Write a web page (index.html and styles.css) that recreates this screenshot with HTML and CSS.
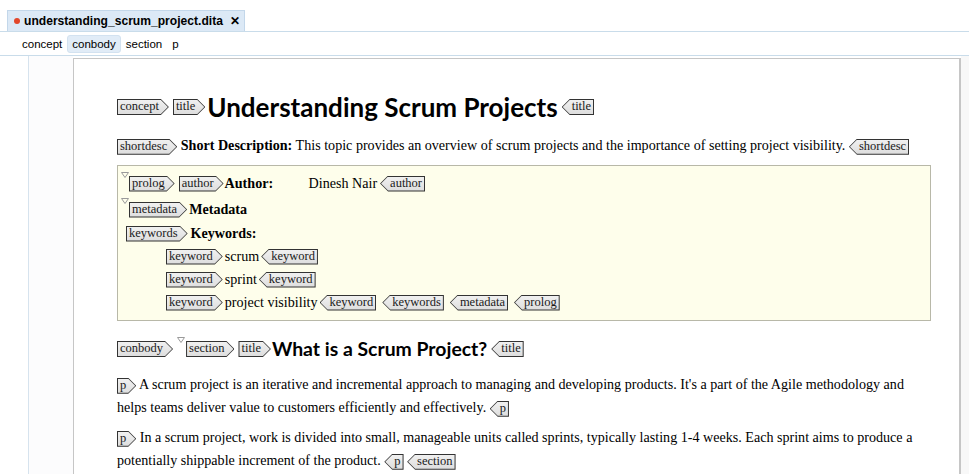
FILE: index.html
```html
<!DOCTYPE html>
<html lang="en">
<head>
    <meta charset="UTF-8">
    <title>understanding_scrum_project.dita</title>
    <link rel="stylesheet" href="styles.css">
</head>
<body>
    <div class="tabbar">
        <div class="tab">
            <span class="dot"></span>
            <span class="tab-name">understanding_scrum_project.dita</span>
            <span class="close">&#10005;</span>
        </div>
    </div>
    <div class="crumbs">
        <span class="crumb">concept</span>
        <span class="crumb active">conbody</span>
        <span class="crumb">section</span>
        <span class="crumb">p</span>
    </div>
    <div class="workspace">
        <div class="gutter"></div>
        <div class="margin"></div>
        <div class="page">
            <div class="row title-row">
                <span class="tag open">concept</span>
                <span class="tag open">title</span>
                <h1 class="title">Understanding Scrum Projects</h1>
                <span class="tag close-tag">title</span>
            </div>

            <div class="row shortdesc">
                <span class="tag open">shortdesc</span>
                <b>Short Description:</b> This topic provides an overview of scrum projects and the importance of setting project visibility.
                <span class="tag close-tag">shortdesc</span>
            </div>

            <div class="prolog">
                <div class="row prolog-row">
                    <span class="fold"><svg width="8" height="6" viewBox="0 0 8 6"><path d="M0.5 0.5 H7.5 L4 5.5 Z" fill="none" stroke="#9a9a9a"/></svg></span>
                    <span class="tag open">prolog</span>
                    <span class="tag open">author</span>
                    <b class="label">Author:</b>
                    <span class="name">Dinesh Nair</span>
                    <span class="tag close-tag">author</span>
                </div>
                <div class="row meta-row">
                    <span class="fold"><svg width="8" height="6" viewBox="0 0 8 6"><path d="M0.5 0.5 H7.5 L4 5.5 Z" fill="none" stroke="#9a9a9a"/></svg></span>
                    <span class="tag open">metadata</span>
                    <b>Metadata</b>
                </div>
                <div class="row keywords-row">
                    <span class="tag open">keywords</span>
                    <b>Keywords:</b>
                </div>
                <div class="row keyword">
                    <span class="tag open">keyword</span>scrum<span class="tag close-tag">keyword</span>
                </div>
                <div class="row keyword">
                    <span class="tag open">keyword</span>sprint<span class="tag close-tag">keyword</span>
                </div>
                <div class="row keyword">
                    <span class="tag open">keyword</span>project visibility<span class="tag close-tag">keyword</span>
                    <span class="tag close-tag">keywords</span>
                    <span class="tag close-tag">metadata</span>
                    <span class="tag close-tag">prolog</span>
                </div>
            </div>

            <div class="row section-row">
                <span class="tag open">conbody</span>
                <span class="fold"><svg width="8" height="6" viewBox="0 0 8 6"><path d="M0.5 0.5 H7.5 L4 5.5 Z" fill="none" stroke="#9a9a9a"/></svg></span>
                <span class="tag open">section</span>
                <span class="tag open">title</span>
                <h2 class="subtitle">What is a Scrum Project?</h2>
                <span class="tag close-tag">title</span>
            </div>

            <p class="para"><span class="tag open">p</span> A scrum project is an iterative and incremental approach to managing and developing products. It's a part of the Agile methodology and helps teams deliver value to customers efficiently and effectively. <span class="tag close-tag">p</span></p>
            <p class="para"><span class="tag open">p</span> In a scrum project, work is divided into small, manageable units called sprints, typically lasting 1-4 weeks. Each sprint aims to produce a potentially shippable increment of the product. <span class="tag close-tag">p</span> <span class="tag close-tag">section</span></p>
        </div>
        <div class="scroll"></div>
    </div>
</body>
</html>
```

FILE: styles.css
```css
html, body {
    margin: 0;
    height: 100%;
    overflow: hidden;
}
body {
    font-family: "Liberation Sans", Arial, sans-serif;
    background: #fff;
    color: #000;
}

/* tabs */
.tabbar {
    height: 31px;
    border-bottom: 1px solid #c9dcea;
    display: flex;
    align-items: flex-end;
    padding-left: 7px;
}
.tab {
    display: flex;
    align-items: center;
    height: 21px;
    width: 238px;
    box-sizing: border-box;
    padding-left: 6px;
    background: #dce9f6;
    border: 1px solid #c3d7ea;
    border-bottom: none;
    font-size: 12.1px;
    font-weight: bold;
}
.dot {
    flex-shrink: 0;
    width: 6px;
    height: 6px;
    border-radius: 50%;
    background: #e2462a;
    margin-right: 4px;
}
.tab-name {
    flex: 1;
}
.close {
    font-size: 12px;
    margin-right: 4px;
}

/* breadcrumb */
.crumbs {
    height: 23px;
    border-bottom: 1px solid #c9dcea;
    display: flex;
    align-items: center;
    padding-left: 17px;
    font-size: 11.5px;
}
.crumb {
    padding: 3px 5px;
    border-radius: 3px;
}
.crumb.active {
    background: #e1ecf7;
    border: 1px solid #d3e2f0;
    padding: 2px 4px;
}

/* editor area */
.workspace {
    display: flex;
    height: 100%;
}
.gutter {
    width: 28px;
    border-right: 1px solid #d6e3ee;
}
.margin {
    width: 44px;
    background: #fcfcfd;
}
.page {
    margin-top: 2px;
    width: 888px;
    border-left: 1px solid #c6c6c6;
    border-top: 1px solid #c6c6c6;
    border-right: 2px solid #c6c6c6;
    padding: 33px 28px 0 43px;
    box-sizing: border-box;
    font-family: "Liberation Serif", "Times New Roman", serif;
    font-size: 14.1px;
}
.scroll {
    flex: 1;
    background: #f8f8f8;
}

.row {
    display: flex;
    align-items: center;
    gap: 4px;
    white-space: nowrap;
}
.title {
    margin: 0 0 0 -2px;
    font-family: Lato, sans-serif;
    font-size: 26px;
    font-weight: bold;
    line-height: 30px;
}
.subtitle {
    margin: 0 0 0 -3px;
    font-family: Lato, sans-serif;
    font-size: 19.4px;
    font-weight: bold;
    line-height: 24px;
}
.shortdesc {
    margin-top: 12px;
    display: block;
    line-height: 22px;
}

/* element tags */
.tag {
    position: relative;
    z-index: 0;
    display: inline-block;
    height: 16px;
    line-height: 15px;
    font-family: "Liberation Serif", serif;
    font-size: 12.5px;
    font-weight: normal;
    color: #1a1a1a;
    background: #333;
    vertical-align: middle;
}
.tag::before {
    content: "";
    position: absolute;
    inset: 1px;
    z-index: -1;
    background: linear-gradient(#f0f0f0, #dedede);
}
.tag.open {
    padding: 0 10px 0 3px;
    clip-path: polygon(0 0, calc(100% - 8px) 0, 100% 50%, calc(100% - 8px) 100%, 0 100%);
}
.tag.open::before {
    clip-path: polygon(0 0, calc(100% - 7px) 0, 100% 50%, calc(100% - 7px) 100%, 0 100%);
}
.tag.close-tag {
    padding: 0 3px 0 10px;
    clip-path: polygon(8px 0, 100% 0, 100% 100%, 8px 100%, 0 50%);
}
.tag.close-tag::before {
    clip-path: polygon(7px 0, 100% 0, 100% 100%, 7px 100%, 0 50%);
}
.fold {
    display: inline-block;
    align-self: flex-start;
    line-height: 0;
}

/* prolog block */
.prolog {
    margin-top: 9px;
    background: #fefeeb;
    border: 1px solid #b8b8a8;
    padding: 6px 0 6px 3px;
}
.prolog .row {
    height: 23px;
    gap: 0;
}
.prolog-row .tag.open {
    margin-right: 4px;
}
.prolog-row .tag.open + .tag.open {
    margin-right: 1px;
}
.prolog-row .label {
    width: 84px;
}
.prolog-row .tag.close-tag {
    margin-left: 3px;
}
.meta-row {
    margin-top: 3px;
}
.meta-row .tag {
    margin-right: 2px;
}
.keywords-row {
    margin-top: 1px;
    padding-left: 5px;
}
.keywords-row .tag {
    margin-right: 3px;
}
.keyword {
    padding-left: 45px;
}
.keyword .tag.open {
    margin-right: 2px;
}
.keyword .tag.close-tag {
    margin-left: 2px;
    margin-right: 4px;
}

/* body */
.section-row {
    margin-top: 16px;
    margin-bottom: 12px;
    height: 24px;
}
.section-row .fold {
    margin-right: -3px;
}
.para {
    margin: 7px 0 0;
    line-height: 23px;
}
```
